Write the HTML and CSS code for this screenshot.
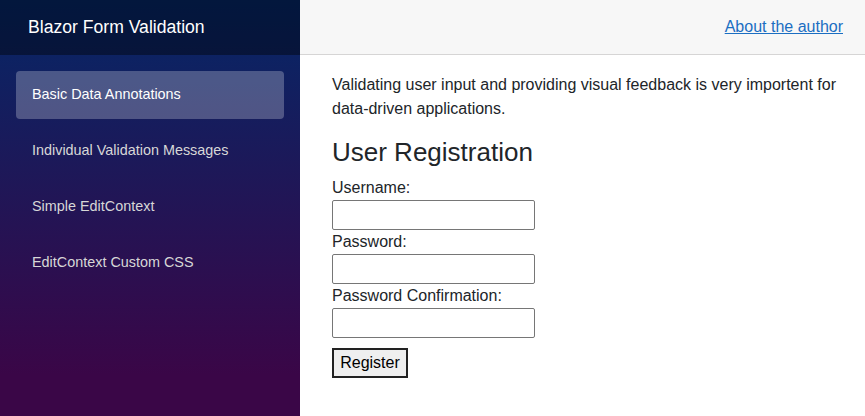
FILE: index.html
```html
<!DOCTYPE html>
<html lang="en">
<head>
<meta charset="utf-8">
<title>Blazor Form Validation</title>
<link rel="stylesheet" href="styles.css">
</head>
<body>
<div class="page">
  <div class="sidebar">
    <div class="brand-row">
      <a class="brand" href="#">Blazor Form Validation</a>
    </div>
    <nav class="nav">
      <div class="nav-item"><a class="nav-link active" href="#">Basic Data Annotations</a></div>
      <div class="nav-item"><a class="nav-link" href="#">Individual Validation Messages</a></div>
      <div class="nav-item"><a class="nav-link" href="#">Simple EditContext</a></div>
      <div class="nav-item"><a class="nav-link" href="#">EditContext Custom CSS</a></div>
    </nav>
  </div>
  <main class="main">
    <div class="top-row">
      <a class="author" href="#">About the author</a>
    </div>
    <article class="content">
      <p class="intro">Validating user input and providing visual feedback is very importent for data-driven applications.</p>
      <h3 class="title">User Registration</h3>
      <form class="form">
        <label class="label">Username:</label>
        <input class="field" type="text">
        <label class="label">Password:</label>
        <input class="field" type="password">
        <label class="label">Password Confirmation:</label>
        <input class="field" type="password">
        <button class="submit" type="button">Register</button>
      </form>
    </article>
  </main>
</div>
</body>
</html>
```

FILE: styles.css
```css
* { box-sizing: border-box; }
html, body {
  margin: 0;
  padding: 0;
  height: 100%;
  font-family: "Liberation Sans", Arial, Helvetica, sans-serif;
  font-size: 16px;
  line-height: 1.5;
  color: #212529;
}
.page {
  display: flex;
  height: 416px;
}
.sidebar {
  width: 300px;
  flex: none;
  background-image: linear-gradient(180deg, rgb(5, 39, 103) 0%, #3a0647 90%);
}
.brand-row {
  height: 55px;
  background-color: rgba(0, 0, 0, 0.4);
  display: flex;
  align-items: center;
  padding-left: 28px;
}
.brand {
  color: #fff;
  text-decoration: none;
  font-size: 17.6px;
  line-height: 1.5;
}
.nav {
  display: flex;
  flex-direction: column;
  padding-top: 16px;
}
.nav-item {
  padding: 0 16px 8px 16px;
  font-size: 14.4px;
}
.nav-link {
  display: flex;
  align-items: center;
  height: 48px;
  padding-left: 16px;
  border-radius: 4px;
  color: #d7d7d7;
  text-decoration: none;
}
.nav-link.active {
  background-color: rgba(255, 255, 255, 0.25);
  color: #fff;
}
.main {
  flex: 1;
  display: flex;
  flex-direction: column;
}
.top-row {
  height: 55px;
  background-color: #f7f7f7;
  border-bottom: 1px solid #d6d5d5;
  display: flex;
  justify-content: flex-end;
  align-items: center;
  padding-right: 22px;
}
.author {
  color: #1b6ec2;
  text-decoration: underline;
}
.content {
  padding: 17.6px 24px 0 32px;
}
.intro {
  margin: 0 0 16px 0;
}
.title {
  margin: 1px 0 8.4px 0;
  font-size: 26px;
  font-weight: 400;
  line-height: 1.2;
}
.form {
  display: flex;
  flex-direction: column;
  align-items: flex-start;
}
.label {
  display: block;
  line-height: 24px;
}
.field {
  display: block;
  width: 203px;
  height: 30px;
  margin: 0;
  padding: 1px 2px;
  border: 1px solid #767676;
  border-radius: 2px;
  background: #fff;
  font: inherit;
}
.submit {
  margin-top: 10px;
  width: 76px;
  height: 30px;
  padding: 0;
  border: 2px solid #222;
  border-radius: 0;
  background-color: #efefef;
  color: #000;
  font-family: inherit;
  font-size: 16px;
  line-height: 1;
}
```
